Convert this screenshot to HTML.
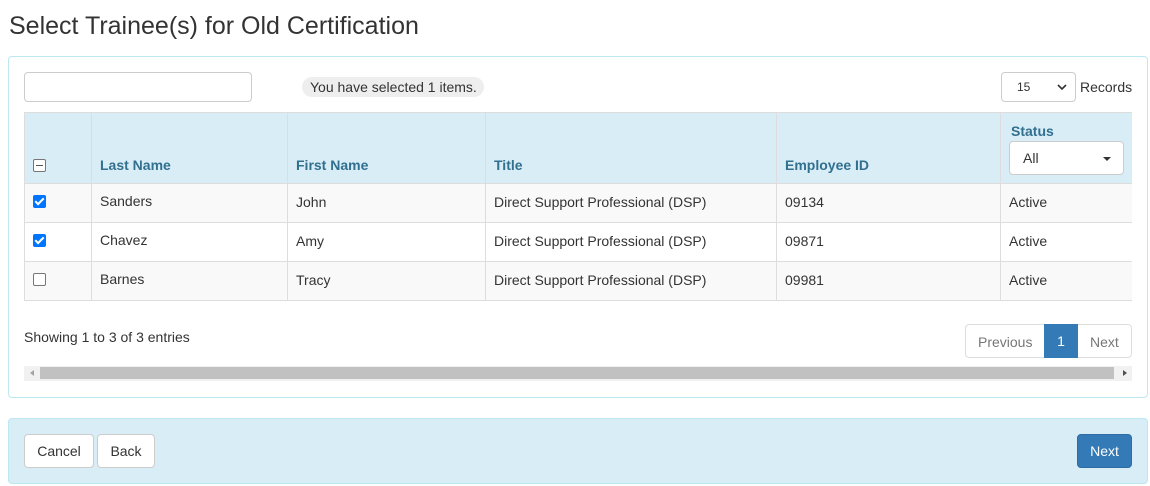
<!DOCTYPE html>
<html><head><style>
*{box-sizing:border-box}
body{margin:0;width:1150px;height:486px;background:#fff;font-family:"Liberation Sans",sans-serif;font-size:14px;color:#333;position:relative;overflow:hidden}
.a{position:absolute}
h1{position:absolute;left:9px;top:12px;margin:0;font-weight:normal;font-size:25px;color:#333}
.panel{left:8px;top:56px;width:1140px;height:342px;border:1px solid #bce8f1;border-radius:4px}
.inp{border:1px solid #ccc;border-radius:4px;background:#fff}
table{position:absolute;left:24px;top:112px;width:1108px;border-collapse:collapse;table-layout:fixed}
td,th{border:1px solid #ddd;padding:0 8px 2px;text-align:left;height:39px;border-top:none}
th{background:#d9edf7;color:#31708f;font-weight:bold;height:71px;vertical-align:bottom;padding-bottom:10px;border-top:1px solid #ddd}
tr.o td{background:#f9f9f9}
td:last-child,th:last-child{border-right:none}
.cb{width:13px;height:13px;border-radius:2px;display:inline-block;vertical-align:middle;position:relative;top:-2px}
.on{background:#0075ff}
.on:after{content:"";position:absolute;left:4px;top:1px;width:3px;height:7px;border:solid #fff;border-width:0 2px 2px 0;transform:rotate(45deg)}
.off{border:1px solid #767676;background:#fff}
.btn{border:1px solid #ccc;border-radius:4px;background:#fff;text-align:center;line-height:31px}
</style></head><body>
<h1>Select Trainee(s) for Old Certification</h1>
<div class="a panel"></div>
<div class="a inp" style="left:24px;top:72px;width:228px;height:30px"></div>
<div class="a" style="left:302px;top:77px;width:182px;height:20px;background:#eee;border-radius:10px;line-height:20px;padding-left:8px">You have selected 1 items.</div>
<div class="a inp" style="left:1001px;top:72px;width:75px;height:30px;font-size:12px;line-height:28px;padding-left:15px">15<svg style="position:absolute;right:8px;top:11px" width="10" height="7" viewBox="0 0 10 7"><path d="M1 1l4 4 4-4" stroke="#333" stroke-width="1.6" fill="none"/></svg></div>
<div class="a" style="left:1080px;top:79px">Records</div>
<table>
<colgroup><col style="width:67px"><col style="width:196px"><col style="width:198px"><col style="width:291px"><col style="width:224px"><col></colgroup>
<tr><th style="padding-bottom:11px"><span class="cb off" style="top:0"><span style="position:absolute;left:2px;top:5px;width:7px;height:1.5px;background:#555"></span></span></th><th>Last Name</th><th>First Name</th><th>Title</th><th>Employee ID</th><th style="position:relative;padding-bottom:0"><div style="position:absolute;left:10px;top:10px">Status</div><div class="inp" style="position:absolute;left:8px;top:28px;width:115px;height:34px;color:#333;font-weight:normal;line-height:32px;padding-left:13px">All<span style="position:absolute;right:12px;top:15px;border:4px solid transparent;border-top:4px solid #333;border-bottom:none"></span></div></th></tr>
<tr class="o"><td><span class="cb on"></span></td><td style="padding-bottom:4px">Sanders</td><td>John</td><td>Direct Support Professional (DSP)</td><td>09134</td><td>Active</td></tr>
<tr><td><span class="cb on"></span></td><td style="padding-bottom:4px">Chavez</td><td>Amy</td><td>Direct Support Professional (DSP)</td><td>09871</td><td>Active</td></tr>
<tr class="o"><td><span class="cb off"></span></td><td style="padding-bottom:4px">Barnes</td><td>Tracy</td><td>Direct Support Professional (DSP)</td><td>09981</td><td>Active</td></tr>
</table>
<div class="a" style="left:24px;top:329px">Showing 1 to 3 of 3 entries</div>
<div class="a" style="left:965px;top:324px;width:167px;height:34px;border:1px solid #ddd;border-radius:4px"></div>
<div class="a" style="left:978px;top:334px;color:#777">Previous</div>
<div class="a" style="left:1044px;top:324px;width:34px;height:34px;background:#337ab7;color:#fff;text-align:center;line-height:34px">1</div>
<div class="a" style="left:1090px;top:334px;color:#777">Next</div>
<div class="a" style="left:24px;top:366px;width:1108px;height:15px;background:#f1f1f1"></div>
<div class="a" style="left:40px;top:367px;width:1074px;height:12px;background:#c1c1c1"></div>
<div class="a" style="left:30px;top:370px;border:3px solid transparent;border-right:4px solid #a3a3a3;border-left:none"></div>
<div class="a" style="left:1123px;top:370px;border:3px solid transparent;border-left:4px solid #505050;border-right:none"></div>
<div class="a" style="left:8px;top:418px;width:1140px;height:66px;background:#d9edf7;border:1px solid #bce8f1;border-radius:4px"></div>
<div class="a btn" style="left:24px;top:434px;width:70px;height:34px;line-height:33px">Cancel</div>
<div class="a btn" style="left:97px;top:434px;width:58px;height:34px;line-height:33px">Back</div>
<div class="a btn" style="left:1077px;top:434px;width:55px;height:34px;line-height:33px;background:#337ab7;border-color:#2e6da4;color:#fff">Next</div>
</body></html>
